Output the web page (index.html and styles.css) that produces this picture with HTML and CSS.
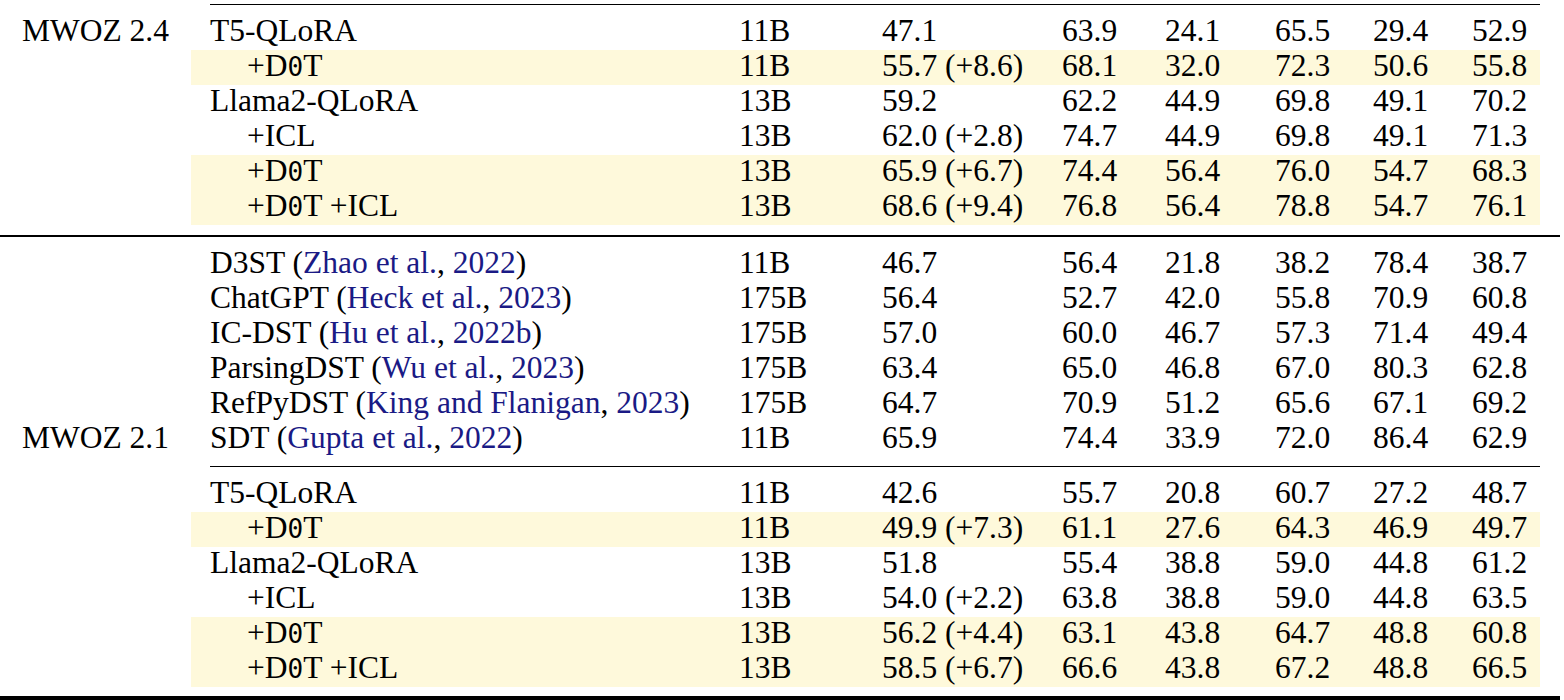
FILE: index.html
```html
<!DOCTYPE html>
<html>
<head>
<meta charset="utf-8">
<link rel="stylesheet" href="styles.css">
</head>
<body>
<div class="table">
  <div class="rule rule-part rule-top"></div>
  <div class="group">
    <div class="row"><div class="label">MWOZ 2.4</div><div class="c">T5-QLoRA</div><div class="c">11B</div><div class="c">47.1</div><div class="c">63.9</div><div class="c">24.1</div><div class="c">65.5</div><div class="c">29.4</div><div class="c">52.9</div></div>
    <div class="row hl"><div class="label"></div><div class="c ind">+D<span class="mono">0</span>T</div><div class="c">11B</div><div class="c">55.7 (+8.6)</div><div class="c">68.1</div><div class="c">32.0</div><div class="c">72.3</div><div class="c">50.6</div><div class="c">55.8</div></div>
    <div class="row"><div class="label"></div><div class="c">Llama2-QLoRA</div><div class="c">13B</div><div class="c">59.2</div><div class="c">62.2</div><div class="c">44.9</div><div class="c">69.8</div><div class="c">49.1</div><div class="c">70.2</div></div>
    <div class="row"><div class="label"></div><div class="c ind">+ICL</div><div class="c">13B</div><div class="c">62.0 (+2.8)</div><div class="c">74.7</div><div class="c">44.9</div><div class="c">69.8</div><div class="c">49.1</div><div class="c">71.3</div></div>
    <div class="row hl"><div class="label"></div><div class="c ind">+D<span class="mono">0</span>T</div><div class="c">13B</div><div class="c">65.9 (+6.7)</div><div class="c">74.4</div><div class="c">56.4</div><div class="c">76.0</div><div class="c">54.7</div><div class="c">68.3</div></div>
    <div class="row hl"><div class="label"></div><div class="c ind">+D<span class="mono">0</span>T +ICL</div><div class="c">13B</div><div class="c">68.6 (+9.4)</div><div class="c">76.8</div><div class="c">56.4</div><div class="c">78.8</div><div class="c">54.7</div><div class="c">76.1</div></div>
  </div>
  <div class="rule rule-mid"></div>
  <div class="group">
    <div class="row"><div class="label"></div><div class="c">D3ST (<span class="cite">Zhao et al.</span>, <span class="cite">2022</span>)</div><div class="c">11B</div><div class="c">46.7</div><div class="c">56.4</div><div class="c">21.8</div><div class="c">38.2</div><div class="c">78.4</div><div class="c">38.7</div></div>
    <div class="row"><div class="label"></div><div class="c">ChatGPT (<span class="cite">Heck et al.</span>, <span class="cite">2023</span>)</div><div class="c">175B</div><div class="c">56.4</div><div class="c">52.7</div><div class="c">42.0</div><div class="c">55.8</div><div class="c">70.9</div><div class="c">60.8</div></div>
    <div class="row"><div class="label"></div><div class="c">IC-DST (<span class="cite">Hu et al.</span>, <span class="cite">2022b</span>)</div><div class="c">175B</div><div class="c">57.0</div><div class="c">60.0</div><div class="c">46.7</div><div class="c">57.3</div><div class="c">71.4</div><div class="c">49.4</div></div>
    <div class="row"><div class="label"></div><div class="c">ParsingDST (<span class="cite">Wu et al.</span>, <span class="cite">2023</span>)</div><div class="c">175B</div><div class="c">63.4</div><div class="c">65.0</div><div class="c">46.8</div><div class="c">67.0</div><div class="c">80.3</div><div class="c">62.8</div></div>
    <div class="row"><div class="label"></div><div class="c">RefPyDST (<span class="cite">King and Flanigan</span>, <span class="cite">2023</span>)</div><div class="c">175B</div><div class="c">64.7</div><div class="c">70.9</div><div class="c">51.2</div><div class="c">65.6</div><div class="c">67.1</div><div class="c">69.2</div></div>
    <div class="row"><div class="label">MWOZ 2.1</div><div class="c">SDT (<span class="cite">Gupta et al.</span>, <span class="cite">2022</span>)</div><div class="c">11B</div><div class="c">65.9</div><div class="c">74.4</div><div class="c">33.9</div><div class="c">72.0</div><div class="c">86.4</div><div class="c">62.9</div></div>
  </div>
  <div class="rule rule-part rule-inner"></div>
  <div class="group">
    <div class="row"><div class="label"></div><div class="c">T5-QLoRA</div><div class="c">11B</div><div class="c">42.6</div><div class="c">55.7</div><div class="c">20.8</div><div class="c">60.7</div><div class="c">27.2</div><div class="c">48.7</div></div>
    <div class="row hl"><div class="label"></div><div class="c ind">+D<span class="mono">0</span>T</div><div class="c">11B</div><div class="c">49.9 (+7.3)</div><div class="c">61.1</div><div class="c">27.6</div><div class="c">64.3</div><div class="c">46.9</div><div class="c">49.7</div></div>
    <div class="row"><div class="label"></div><div class="c">Llama2-QLoRA</div><div class="c">13B</div><div class="c">51.8</div><div class="c">55.4</div><div class="c">38.8</div><div class="c">59.0</div><div class="c">44.8</div><div class="c">61.2</div></div>
    <div class="row"><div class="label"></div><div class="c ind">+ICL</div><div class="c">13B</div><div class="c">54.0 (+2.2)</div><div class="c">63.8</div><div class="c">38.8</div><div class="c">59.0</div><div class="c">44.8</div><div class="c">63.5</div></div>
    <div class="row hl"><div class="label"></div><div class="c ind">+D<span class="mono">0</span>T</div><div class="c">13B</div><div class="c">56.2 (+4.4)</div><div class="c">63.1</div><div class="c">43.8</div><div class="c">64.7</div><div class="c">48.8</div><div class="c">60.8</div></div>
    <div class="row hl"><div class="label"></div><div class="c ind">+D<span class="mono">0</span>T +ICL</div><div class="c">13B</div><div class="c">58.5 (+6.7)</div><div class="c">66.6</div><div class="c">43.8</div><div class="c">67.2</div><div class="c">48.8</div><div class="c">66.5</div></div>
  </div>
  <div class="rule rule-bottom"></div>
</div>
</body>
</html>
```
FILE: styles.css
```css
html, body {
  margin: 0;
  padding: 0;
  background: #ffffff;
}

body {
  font-family: "Liberation Serif", "Times New Roman", serif;
  font-size: 31.5px;
  color: #000000;
  width: 1564px;
  height: 700px;
  overflow: hidden;
}

.table {
  width: 1560px;
  padding-top: 4px;
}

.group {
  display: flex;
  flex-direction: column;
}

.row {
  display: grid;
  grid-template-columns: 191px 529px 143px 180px 103px 110px 98px 99px 87px;
  height: 35px;
  line-height: 31px;
  white-space: nowrap;
}

.label {
  padding-left: 22px;
}

.c {
  padding-left: 19px;
}

.c.ind {
  padding-left: 56px;
}

.hl .c {
  background: #fef9db;
}

.mono {
  font-family: "DejaVu Sans Mono", "Liberation Mono", monospace;
  font-size: 26px;
}

.cite {
  color: #1a1a85;
}

.rule {
  background: #000000;
}

.rule-part {
  margin-left: 210px;
  width: 1330px;
  height: 1px;
}

.rule-top {
  margin-bottom: 10px;
}

.rule-mid {
  height: 2px;
  margin-top: 10px;
  margin-bottom: 10px;
}

.rule-inner {
  margin-top: 9px;
  margin-bottom: 10px;
}

.rule-bottom {
  height: 4px;
  margin-top: 9px;
}
```
